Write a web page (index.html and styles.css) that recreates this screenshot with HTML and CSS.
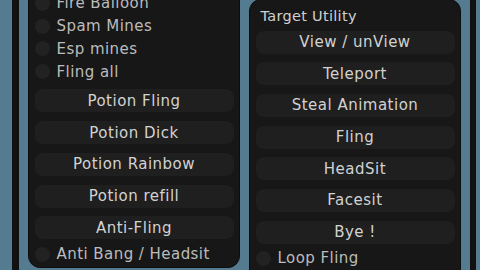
FILE: index.html
```html
<!DOCTYPE html>
<html>
<head>
<meta charset="utf-8">
<link rel="stylesheet" href="styles.css">
</head>
<body>
<div class="stage">
  <div class="strip strip-left"></div>
  <div class="panel panel-left">
    <div class="toggles">
      <div class="toggle"><span class="dot"></span><span class="label">Fire Balloon</span></div>
      <div class="toggle"><span class="dot"></span><span class="label">Spam Mines</span></div>
      <div class="toggle"><span class="dot"></span><span class="label">Esp mines</span></div>
      <div class="toggle"><span class="dot"></span><span class="label">Fling all</span></div>
    </div>
    <div class="buttons buttons-left">
      <div class="btn">Potion Fling</div>
      <div class="btn">Potion Dick</div>
      <div class="btn">Potion Rainbow</div>
      <div class="btn">Potion refill</div>
      <div class="btn">Anti-Fling</div>
    </div>
    <div class="toggle toggle-after-left"><span class="dot"></span><span class="label">Anti Bang / Headsit</span></div>
  </div>
  <div class="panel panel-right">
    <div class="title">Target Utility</div>
    <div class="buttons buttons-right">
      <div class="btn">View / unView</div>
      <div class="btn">Teleport</div>
      <div class="btn">Steal Animation</div>
      <div class="btn">Fling</div>
      <div class="btn">HeadSit</div>
      <div class="btn">Facesit</div>
      <div class="btn">Bye !</div>
    </div>
    <div class="toggle toggle-after-right"><span class="dot"></span><span class="label">Loop Fling</span></div>
  </div>
  <div class="strip strip-right"></div>
</div>
</body>
</html>
```
FILE: styles.css
```css
html, body {
  margin: 0;
  padding: 0;
}
body {
  width: 480px;
  height: 270px;
  overflow: hidden;
  background: #547b90;
  font-family: "DejaVu Sans", "Liberation Sans", sans-serif;
}
.stage {
  display: flex;
  align-items: flex-start;
  width: 480px;
  height: 270px;
  overflow: hidden;
}
.strip {
  width: 7px;
  height: 270px;
  background: #111111;
  flex: none;
}
.strip-left {
  margin-left: 12px;
  margin-right: 9px;
}
.strip-right {
  width: 6px;
  margin-left: 9px;
}
.panel {
  box-sizing: border-box;
  width: 212px;
  flex: none;
  background: #171717;
  border: 1.5px solid #0d0d0d;
  border-radius: 12px;
  display: flex;
  flex-direction: column;
}
.panel-left {
  height: 290px;
  margin-top: -22px;
  padding: 0 5.5px;
}
.panel-right {
  height: 290px;
  margin-left: 9px;
  margin-top: -1px;
  padding: 0 5.5px;
}
.toggles {
  display: flex;
  flex-direction: column;
  margin-top: 13.15px;
}
.toggle {
  display: flex;
  align-items: center;
  height: 22.7px;
  flex: none;
}
.dot {
  width: 15px;
  height: 15px;
  border-radius: 50%;
  background: #222222;
  flex: none;
}
.label {
  margin-left: 7px;
  font-size: 15px;
  letter-spacing: 0.45px;
  color: #bcbcbc;
  white-space: nowrap;
}
.buttons {
  display: flex;
  flex-direction: column;
  gap: 8.7px;
}
.buttons-left {
  margin-top: 6.6px;
}
.btn {
  height: 23px;
  flex: none;
  border-radius: 8px;
  background: #1f1f1f;
  color: #d2d2d2;
  font-size: 15px;
  letter-spacing: 0.5px;
  display: flex;
  align-items: center;
  justify-content: center;
  white-space: nowrap;
}
.toggle-after-left {
  margin-top: 3.8px;
}
.title {
  height: 21px;
  margin-top: 5px;
  margin-left: 5px;
  font-size: 14.5px;
  letter-spacing: 0.3px;
  color: #d0d0d0;
  display: flex;
  align-items: center;
}
.buttons-right {
  margin-top: 4.5px;
}
.toggle-after-right {
  margin-top: 3.5px;
}
```
